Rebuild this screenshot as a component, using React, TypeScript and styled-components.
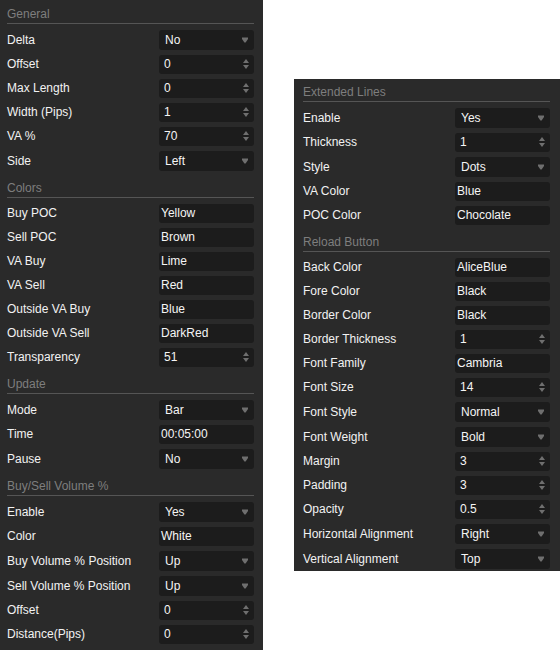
import React from 'react'
import styled, { createGlobalStyle } from 'styled-components'

const GlobalStyle = createGlobalStyle`
  html, body {
    margin: 0;
    padding: 0;
    background: #ffffff;
  }
  body {
    font-family: 'Liberation Sans', Arial, sans-serif;
    font-size: 12px;
  }
`

type Kind = 'select' | 'number' | 'text'

interface Field {
  label: string
  value: string
  kind: Kind
}

interface Section {
  title: string
  fields: Field[]
}

const leftSections: Section[] = [
  {
    title: 'General',
    fields: [
      { label: 'Delta', value: 'No', kind: 'select' },
      { label: 'Offset', value: '0', kind: 'number' },
      { label: 'Max Length', value: '0', kind: 'number' },
      { label: 'Width (Pips)', value: '1', kind: 'number' },
      { label: 'VA %', value: '70', kind: 'number' },
      { label: 'Side', value: 'Left', kind: 'select' },
    ],
  },
  {
    title: 'Colors',
    fields: [
      { label: 'Buy POC', value: 'Yellow', kind: 'text' },
      { label: 'Sell POC', value: 'Brown', kind: 'text' },
      { label: 'VA Buy', value: 'Lime', kind: 'text' },
      { label: 'VA Sell', value: 'Red', kind: 'text' },
      { label: 'Outside VA Buy', value: 'Blue', kind: 'text' },
      { label: 'Outside VA Sell', value: 'DarkRed', kind: 'text' },
      { label: 'Transparency', value: '51', kind: 'number' },
    ],
  },
  {
    title: 'Update',
    fields: [
      { label: 'Mode', value: 'Bar', kind: 'select' },
      { label: 'Time', value: '00:05:00', kind: 'text' },
      { label: 'Pause', value: 'No', kind: 'select' },
    ],
  },
  {
    title: 'Buy/Sell Volume %',
    fields: [
      { label: 'Enable', value: 'Yes', kind: 'select' },
      { label: 'Color', value: 'White', kind: 'text' },
      { label: 'Buy Volume % Position', value: 'Up', kind: 'select' },
      { label: 'Sell Volume % Position', value: 'Up', kind: 'select' },
      { label: 'Offset', value: '0', kind: 'number' },
      { label: 'Distance(Pips)', value: '0', kind: 'number' },
    ],
  },
]

const rightSections: Section[] = [
  {
    title: 'Extended Lines',
    fields: [
      { label: 'Enable', value: 'Yes', kind: 'select' },
      { label: 'Thickness', value: '1', kind: 'number' },
      { label: 'Style', value: 'Dots', kind: 'select' },
      { label: 'VA Color', value: 'Blue', kind: 'text' },
      { label: 'POC Color', value: 'Chocolate', kind: 'text' },
    ],
  },
  {
    title: 'Reload Button',
    fields: [
      { label: 'Back Color', value: 'AliceBlue', kind: 'text' },
      { label: 'Fore Color', value: 'Black', kind: 'text' },
      { label: 'Border Color', value: 'Black', kind: 'text' },
      { label: 'Border Thickness', value: '1', kind: 'number' },
      { label: 'Font Family', value: 'Cambria', kind: 'text' },
      { label: 'Font Size', value: '14', kind: 'number' },
      { label: 'Font Style', value: 'Normal', kind: 'select' },
      { label: 'Font Weight', value: 'Bold', kind: 'select' },
      { label: 'Margin', value: '3', kind: 'number' },
      { label: 'Padding', value: '3', kind: 'number' },
      { label: 'Opacity', value: '0.5', kind: 'number' },
      { label: 'Horizontal Alignment', value: 'Right', kind: 'select' },
      { label: 'Vertical Alignment', value: 'Top', kind: 'select' },
    ],
  },
]

const Page = styled.div`
  display: flex;
  align-items: flex-start;
  gap: 31px;
  width: 560px;
`

const Panel = styled.div<{ $left: number; $right: number; $top: number; $minHeight?: number }>`
  flex: 1 1 auto;
  box-sizing: border-box;
  background: #2a2a2a;
  padding: ${(p) => `${p.$top}px ${p.$right}px 0 ${p.$left}px`};
  min-height: ${(p) => (p.$minHeight ? `${p.$minHeight}px` : 'auto')};
  &.left {
    flex: 0 0 263px;
  }
  &.right {
    flex: 0 0 266px;
    margin-top: 79px;
  }
`

const Group = styled.div`
  & + & {
    margin-top: 3px;
  }
`

const GroupTitle = styled.div`
  box-sizing: border-box;
  height: 22px;
  padding-top: 3px;
  line-height: 18px;
  color: #7e7e7e;
  border-bottom: 1px solid #555555;
  margin-bottom: 3px;
`

const Row = styled.div<{ $kind: Kind }>`
  display: flex;
  align-items: center;
  justify-content: space-between;
  height: ${(p) => (p.$kind === 'select' ? 25 : 24)}px;
`

const Label = styled.div`
  color: #f2f2f2;
  white-space: nowrap;
`

const Box = styled.div<{ $kind: Kind }>`
  box-sizing: border-box;
  width: 95px;
  height: ${(p) => (p.$kind === 'select' ? 20 : 19)}px;
  border-radius: 3px;
  background: #1c1c1c;
  color: #f5f5f5;
  display: flex;
  align-items: center;
  justify-content: space-between;
  padding: 0 5px 0 ${(p) => (p.$kind === 'text' ? 2 : p.$kind === 'select' ? 6 : 5)}px;
`

const Arrows = styled.div`
  display: flex;
  flex-direction: column;
  gap: 2px;
`

const DropArrow = () => (
  <svg width="6" height="6" viewBox="0 0 6 6" style={{ marginRight: 1 }}>
    <path d="M0 0.5 H6 V2 L3.6 5.5 H2.4 L0 2 Z" fill="#6f6f6f" />
  </svg>
)

const Spinner = () => (
  <Arrows>
    <svg width="6" height="4" viewBox="0 0 6 4">
      <path d="M3 0 L6 4 H0 Z" fill="#6f6f6f" />
    </svg>
    <svg width="6" height="4" viewBox="0 0 6 4">
      <path d="M0 0 H6 L3 4 Z" fill="#6f6f6f" />
    </svg>
  </Arrows>
)

function PropertyRow({ field }: { field: Field }) {
  return (
    <Row $kind={field.kind}>
      <Label>{field.label}</Label>
      <Box $kind={field.kind}>
        <span>{field.value}</span>
        {field.kind === 'select' && <DropArrow />}
        {field.kind === 'number' && <Spinner />}
      </Box>
    </Row>
  )
}

function Sections({ sections }: { sections: Section[] }) {
  return (
    <>
      {sections.map((section) => (
        <Group key={section.title}>
          <GroupTitle>{section.title}</GroupTitle>
          {section.fields.map((field, i) => (
            <PropertyRow key={i} field={field} />
          ))}
        </Group>
      ))}
    </>
  )
}

export default function App() {
  return (
    <>
      <GlobalStyle />
      <Page>
        <Panel className="left" $left={7} $right={9} $top={2} $minHeight={650}>
          <Sections sections={leftSections} />
        </Panel>
        <Panel className="right" $left={9} $right={10} $top={1}>
          <Sections sections={rightSections} />
        </Panel>
      </Page>
    </>
  )
}
